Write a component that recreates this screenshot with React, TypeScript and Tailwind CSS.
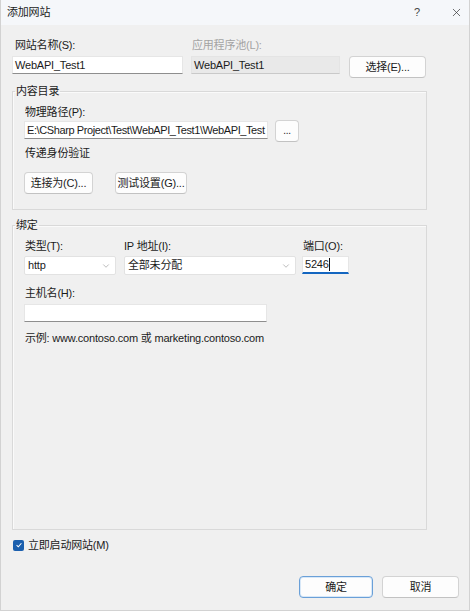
import { ChevronDown, X } from 'lucide-react'

const FONT = "font-['Liberation_Sans','Noto_Sans_CJK_SC',sans-serif]"

function TextBox({ value, className = '', disabled = false }: { value?: string; className?: string; disabled?: boolean }) {
  return (
    <div
      className={`h-[18px] overflow-hidden whitespace-nowrap pl-[2px] leading-[17px] border ${
        disabled
          ? 'bg-[#e9e9e9] border-[#e4e4e4] border-b-[#c9c9c9]'
          : 'bg-white border-[#e6e6e6] border-b-[#8e8e8e]'
      } ${className}`}
    >
      {value}
    </div>
  )
}

function Button({ label, className = '', primary = false }: { label: string; className?: string; primary?: boolean }) {
  return (
    <div
      className={`flex items-center justify-center whitespace-nowrap rounded-[4px] border bg-[#fdfdfd] ${
        primary ? 'border-[#6aa0d8] shadow-[inset_0_0_0_1px_#d8e8f8]' : 'border-[#d3d3d3] border-b-[#c2c2c2]'
      } ${className}`}
    >
      {label}
    </div>
  )
}

function Select({ value, className = '' }: { value: string; className?: string }) {
  return (
    <div
      className={`h-[19px] flex items-center justify-between bg-white border border-[#e2e2e2] rounded-[2px] pl-[3px] pr-[4px] ${className}`}
    >
      <span className="leading-none">{value}</span>
      <ChevronDown className="w-[10px] h-[10px] text-[#7a7a7a]" strokeWidth={1.2} />
    </div>
  )
}

function Group({ title, className = '', children }: { title: string; className?: string; children: React.ReactNode }) {
  return (
    <fieldset className={`border border-[#d9d9d9] shadow-[inset_1px_1px_0_#fafafa] pl-[11px] ${className}`}>
      <legend className="-ml-[9px] px-[1px] leading-[16px]">{title}</legend>
      {children}
    </fieldset>
  )
}

export default function App() {
  return (
    <div className={`w-[474px] h-[614px] bg-white text-[11px] tracking-[-0.2px] text-[#1b1b1b] ${FONT}`}>
      <div className="w-[470px] h-[611px] bg-[#f0f0f0] border-x border-b border-[#d2d2d2] flex flex-col">
        {/* title bar */}
        <div className="h-[25px] shrink-0 flex items-center bg-[#f5f7fa] pl-[6px] pr-[6px]">
          <span className="flex-1 leading-none">添加网站</span>
          <span className="w-[12px] text-center text-[#444] leading-none mr-[27px]">?</span>
          <X className="w-[13px] h-[13px] text-[#333]" strokeWidth={1.3} />
        </div>

        <div className="flex-1 flex flex-col pl-[11px] pr-[42px] leading-[16px]">
          {/* site name / app pool */}
          <div className="mt-[12px] flex items-start">
            <div className="w-[171px] flex flex-col">
              <span className="pl-[3px]">网站名称(S):</span>
              <TextBox value="WebAPI_Test1" className="mt-[3px]" />
            </div>
            <div className="w-[149px] ml-[8px] flex flex-col">
              <span className="pl-[1px] text-[#a3a3a3]">应用程序池(L):</span>
              <TextBox value="WebAPI_Test1" disabled className="mt-[3px]" />
            </div>
            <Button label="选择(E)..." className="w-[77px] h-[22px] ml-[9px] mt-[19px]" />
          </div>

          {/* content directory */}
          <Group title="内容目录" className="mt-[5px] pb-[15px]">
            <div className="pt-[5px] pl-[1px]">物理路径(P):</div>
            <div className="flex items-start">
              <TextBox
                value="E:\CSharp Project\Test\WebAPI_Test1\WebAPI_Test"
                className="w-[244px] mt-[1px] tracking-[-0.4px]"
              />
              <Button label="..." className="w-[24px] h-[22px] ml-[7px] text-[10px]" />
            </div>
            <div className="mt-[3px] pl-[1px]">传递身份验证</div>
            <div className="mt-[11px] flex">
              <Button label="连接为(C)..." className="w-[69px] h-[22px]" />
              <Button label="测试设置(G)..." className="w-[72px] h-[22px] ml-[22px]" />
            </div>
          </Group>

          {/* bindings */}
          <Group title="绑定" className="mt-[7px] flex-1">
            <div className="pt-[5px] flex items-start">
              <div className="w-[92px] flex flex-col">
                <span className="pl-[1px]">类型(T):</span>
                <Select value="http" className="mt-[2px]" />
              </div>
              <div className="w-[172px] ml-[8px] flex flex-col">
                <span>IP 地址(I):</span>
                <Select value="全部未分配" className="mt-[2px]" />
              </div>
              <div className="w-[47px] ml-[6px] flex flex-col">
                <span className="pl-[1px]">端口(O):</span>
                <div className="mt-[2px] h-[18px] bg-white border border-[#e6e6e6] border-b-2 border-b-[#1466c0] pl-[2px] leading-[15px] flex items-center">
                  <span>5246</span>
                  <span className="w-px h-[13px] bg-[#111]" />
                </div>
              </div>
            </div>
            <div className="mt-[10px] pl-[1px]">主机名(H):</div>
            <TextBox className="w-[243px] mt-[3px]" />
            <div className="mt-[8px] pl-[1px]">示例: www.contoso.com 或 marketing.contoso.com</div>
          </Group>

          {/* start immediately */}
          <div className="mt-[7px] flex items-center h-[16px]">
            <span className="w-[11px] h-[11px] ml-px rounded-[2px] bg-[#1b5fae] flex items-center justify-center">
              <svg viewBox="0 0 10 10" className="w-[8px] h-[8px]">
                <path d="M2 5.2 L4.1 7.2 L8 2.8" fill="none" stroke="white" strokeWidth="1.3" />
              </svg>
            </span>
            <span className="ml-[4px]">立即启动网站(M)</span>
          </div>

          {/* dialog buttons */}
          <div className="mt-[23px] mb-[12px] flex justify-end -mr-[32px]">
            <Button label="确定" primary className="w-[74px] h-[22px]" />
            <Button label="取消" className="w-[77px] h-[22px] ml-[9px]" />
          </div>
        </div>
      </div>
    </div>
  )
}
